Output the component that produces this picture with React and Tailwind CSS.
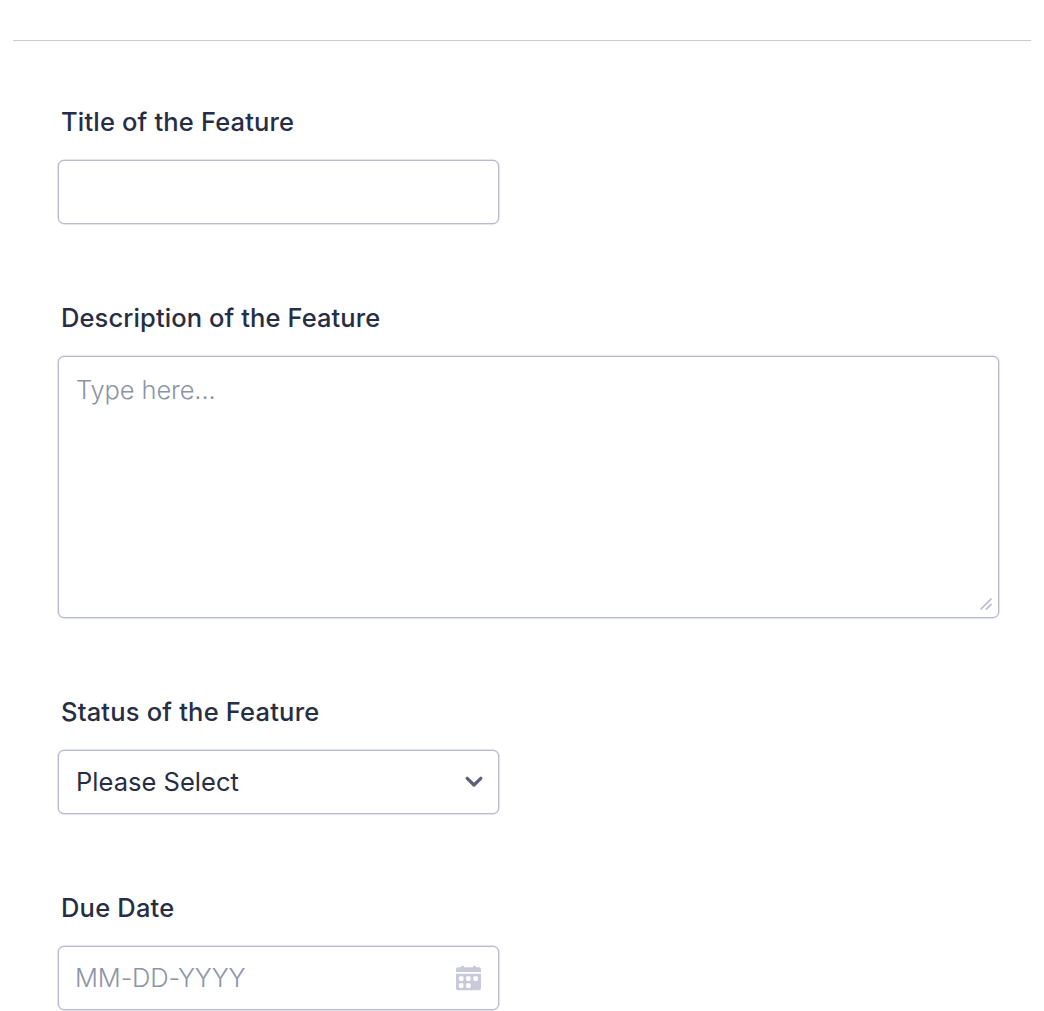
import React from "react";

function Field({ label, labelClass, children }) {
  return (
    <section className="flex flex-col">
      <div className={`flex h-8 items-center pl-[3px] text-[25.5px] leading-8 font-medium whitespace-nowrap text-[#272e44] ${labelClass}`}>
        <span>{label}</span>
      </div>
      <div className="mt-[22px]">{children}</div>
    </section>
  );
}

const box = "rounded-[6px] border-[1.5px] border-[#b8bacd] bg-white shadow-[0_0_0_0.5px_#c9cbda]";

function Chevron() {
  return (
    <svg width="18" height="12" viewBox="0 0 18 12" fill="none" stroke="#5b6278" strokeWidth="3.2" strokeLinecap="round" strokeLinejoin="round">
      <path d="M2.2 2.3 9 9 15.8 2.3" />
    </svg>
  );
}

function Calendar() {
  return (
    <svg width="25" height="26" viewBox="0 0 25 26" fill="#c8cadb">
      <rect x="5" y="0.8" width="3" height="4" rx="1.2" />
      <rect x="17" y="0.8" width="3" height="4" rx="1.2" />
      <path d="M2 2.2h21a2 2 0 0 1 2 2v2.7H0V4.2a2 2 0 0 1 2-2z" />
      <path
        fillRule="evenodd"
        d="M0 8.7h25v14.6a2 2 0 0 1-2 2H2a2 2 0 0 1-2-2zM4.3 11.3a1.4 1.4 0 0 0-1.4 1.4v1.8a1.4 1.4 0 0 0 1.4 1.4h1.8a1.4 1.4 0 0 0 1.4-1.4v-1.8a1.4 1.4 0 0 0-1.4-1.4zM11.5 11.3a1.4 1.4 0 0 0-1.4 1.4v1.8a1.4 1.4 0 0 0 1.4 1.4h1.8a1.4 1.4 0 0 0 1.4-1.4v-1.8a1.4 1.4 0 0 0-1.4-1.4zM18.7 11.3a1.4 1.4 0 0 0-1.4 1.4v1.8a1.4 1.4 0 0 0 1.4 1.4h1.8a1.4 1.4 0 0 0 1.4-1.4v-1.8a1.4 1.4 0 0 0-1.4-1.4zM4.3 18.3a1.4 1.4 0 0 0-1.4 1.4v1.8a1.4 1.4 0 0 0 1.4 1.4h1.8a1.4 1.4 0 0 0 1.4-1.4v-1.8a1.4 1.4 0 0 0-1.4-1.4zM11.5 18.3a1.4 1.4 0 0 0-1.4 1.4v1.8a1.4 1.4 0 0 0 1.4 1.4h1.8a1.4 1.4 0 0 0 1.4-1.4v-1.8a1.4 1.4 0 0 0-1.4-1.4z"
      />
    </svg>
  );
}

export default function App() {
  return (
    <main className="h-[1011px] w-[1044px] overflow-hidden bg-white pt-10 font-['Inter',sans-serif]">
      <hr className="mx-[13px] border-t border-[#c8cadb]" />
      <form className="mt-[65px] ml-[58px] flex w-[941px] flex-col gap-[78px]">
        <Field label="Title of the Feature" labelClass="tracking-[0.17px]">
          <div className={`h-16 w-[441px] ${box}`} />
        </Field>
        <Field label="Description of the Feature" labelClass="tracking-[0.1px]">
          <div className={`relative h-[262px] w-full pt-[17px] pl-[17px] ${box}`}>
            <span className="block text-[25.5px] leading-8 font-light tracking-[-0.12px] text-[#8d94a8]">Type here...</span>
            <svg className="absolute right-[6px] bottom-[7px]" width="12" height="12" viewBox="0 0 12 12" fill="none" stroke="#b8bacd" strokeWidth="1.7" strokeLinecap="round">
              <path d="M1 11 11 1M6.5 11 11 6.5" />
            </svg>
          </div>
        </Field>
        <Field label="Status of the Feature" labelClass="tracking-[0.2px]">
          <div className={`flex h-16 w-[441px] items-center justify-between pr-[15px] pl-[17px] ${box}`}>
            <span className="text-[25.5px] leading-8 tracking-[0.02px] text-[#272e44]">Please Select</span>
            <Chevron />
          </div>
        </Field>
        <Field label="Due Date" labelClass="tracking-[0.2px]">
          <div className={`flex h-16 w-[441px] items-center justify-between pr-[17px] pl-4 ${box}`}>
            <span className="text-[25.5px] leading-8 font-light tracking-[-0.12px] text-[#8d94a8]">MM-DD-YYYY</span>
            <Calendar />
          </div>
        </Field>
      </form>
    </main>
  );
}
